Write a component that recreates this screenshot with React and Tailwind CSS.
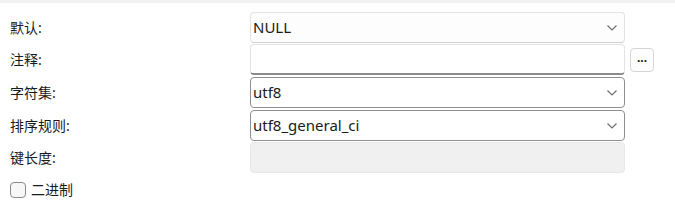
import React from "react";

const font = { fontFamily: '"Noto Sans", "Noto Sans CJK SC", sans-serif' };

function Chevron() {
  return (
    <svg width="12" height="8" viewBox="0 0 12 8" className="shrink-0">
      <path d="M1.5 1.5 L6 6 L10.5 1.5" fill="none" stroke="#6b6b6b" strokeWidth="1.1" />
    </svg>
  );
}

function Combo({ value, dark }) {
  return (
    <div
      className={
        "flex h-[31px] w-[375px] items-center justify-between rounded-[4px] border pl-[2px] pr-[6px] " +
        (dark ? "border-[#8f8f8f] bg-white" : "border-[#e3e3e3] border-b-[#d0d0d0] bg-[#fdfdfd]")
      }
    >
      <span className="text-[15px] leading-none text-[#1a1a1a]">{value}</span>
      <Chevron />
    </div>
  );
}

function Label({ children }) {
  return (
    <div className="w-[250px] shrink-0 pl-[10px] text-[14px] leading-none text-[#1a1a1a]">{children}</div>
  );
}

export default function App() {
  return (
    <div className="h-[207px] w-[675px] bg-white" style={font}>
      <div className="h-[3px] w-full bg-[#f0f0f0]" />
      <div className="flex flex-col pt-[9px]">
        <div className="flex items-center">
          <Label>默认:</Label>
          <Combo value="NULL" />
        </div>
        <div className="mt-[1px] flex items-center">
          <Label>注释:</Label>
          <div className="h-[31px] w-[375px] rounded-[4px] border border-[#e3e3e3] border-b-2 border-b-[#8a8a8a] bg-white" />
          <div className="ml-[5px] flex h-[24px] w-[24px] items-center justify-center rounded-[4px] border border-[#d6d6d6] bg-[#fdfdfd] text-[12px] font-bold leading-none text-[#1a1a1a]">
            <span className="-mt-[4px]">...</span>
          </div>
        </div>
        <div className="mt-[2px] flex items-center">
          <Label>字符集:</Label>
          <Combo value="utf8" dark />
        </div>
        <div className="mt-[2px] flex items-center">
          <Label>排序规则:</Label>
          <Combo value="utf8_general_ci" dark />
        </div>
        <div className="mt-[1px] flex items-center">
          <Label>键长度:</Label>
          <div className="h-[31px] w-[375px] rounded-[4px] border border-[#e8e8e8] bg-[#f0f0f0]" />
        </div>
        <div className="mt-[9px] flex items-center pl-[10px]">
          <div className="h-[16px] w-[16px] rounded-[4px] border border-[#8a8a8a] bg-[#f7f7f7]" />
          <span className="ml-[5px] text-[14px] leading-none text-[#1a1a1a]">二进制</span>
        </div>
      </div>
    </div>
  );
}
